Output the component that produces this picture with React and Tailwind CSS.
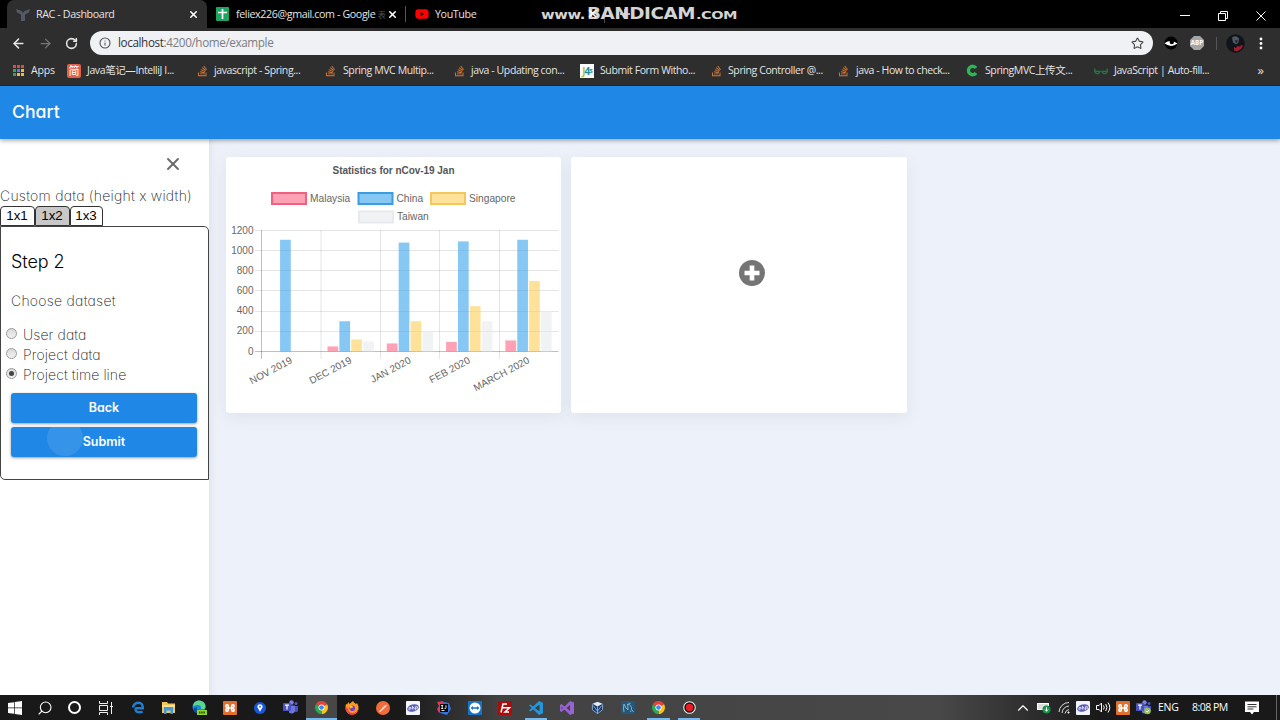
import React from 'react';
import {
    ArrowLeft, ArrowRight, RotateCw, Info, Star, X, Minus, EllipsisVertical, Search, ChevronUp,
} from 'lucide-react';
import { FaStackOverflow, FaYoutube, FaFirefoxBrowser } from 'react-icons/fa';

const BOOKMARKS = [
    { icon: 'jian', label: 'Java笔记—IntelliJ I...', width: 'w-[130px]', gap: 'gap-[6px]' },
    { icon: 'so', label: 'javascript - Spring...', width: 'w-[128px]', gap: 'gap-[5px]' },
    { icon: 'so', label: 'Spring MVC Multip...', width: 'w-[129px]', gap: 'gap-[6px]' },
    { icon: 'so', label: 'java - Updating con...', width: 'w-[126px]', gap: 'gap-[5px]' },
    { icon: 'j4s', label: 'Submit Form Witho...', width: 'w-[131px]', gap: 'gap-[6px]' },
    { icon: 'so', label: 'Spring Controller @...', width: 'w-[127px]', gap: 'gap-[5px]' },
    { icon: 'so', label: 'java - How to check...', width: 'w-[128px]', gap: 'gap-[6px]' },
    { icon: 'c', label: 'SpringMVC上传文...', width: 'w-[128px]', gap: 'gap-[6px]' },
    { icon: 'gfg', label: 'JavaScript | Auto-fill...', width: 'w-[128px]', gap: 'gap-[6px]' },
];

const SERIES = [
    { name: 'Malaysia', fill: '#ff6384', border: '#f0607f', legendX: 271, legendY: 198, values: [0, 50, 80, 95, 110] },
    { name: 'China', fill: '#36a2eb', border: '#3a9ddf', legendX: 357.5, legendY: 198, values: [1108, 300, 1080, 1092, 1108] },
    { name: 'Singapore', fill: '#ffce56', border: '#f5c75a', legendX: 430, legendY: 198, values: [0, 120, 300, 450, 700] },
    { name: 'Taiwan', fill: '#e7e9ed', border: '#e7e9ed', legendX: 358, legendY: 216.5, values: [0, 100, 200, 300, 400] },
];
const MONTHS = ['NOV 2019', 'DEC 2019', 'JAN 2020', 'FEB 2020', 'MARCH 2020'];

const BookmarkIcon = ({ type }) => {
    if (type === 'so') return <FaStackOverflow className="-ml-[1px] h-[12px] w-[13px] shrink-0 text-[#d97a33]" />;
    if (type === 'jian') {
        return <span className="flex h-[14px] w-[14px] shrink-0 items-center justify-center rounded-[2px] bg-[#e0604c] font-['Noto_Sans_CJK_SC',sans-serif] text-[11px] leading-none tracking-normal text-white">简</span>;
    }
    if (type === 'j4s') {
        return (
            <span className="flex h-[14px] w-[14px] shrink-0 items-center justify-center bg-white text-[10px] leading-none font-bold tracking-[-1px]">
                <span className="text-[#a7c81f]">J</span><span className="text-[#1c8f99]">4</span><span className="text-[7px] text-[#1c8f99]">s</span>
            </span>
        );
    }
    if (type === 'c') {
        return (
            <svg className="h-[13px] w-[13px] shrink-0" viewBox="0 0 13 13" fill="none">
                <path d="M10 4A4.2 4.2 0 1 0 10 9" stroke="#2fb457" strokeWidth="3.4" />
            </svg>
        );
    }
    return (
        <svg className="h-[12px] w-[14px] shrink-0" viewBox="0 0 14 12" fill="none" stroke="#1f7a42" strokeWidth="1.3">
            <path d="M0 6.300H6A2.700 3.200 0 1 1 1.200 3.600M14 6.300H8A2.700 3.200 0 1 0 12.800 3.600" />
        </svg>
    );
};

const TabStrip = () => (
    <div className="relative flex h-7 shrink-0 items-end bg-black pl-[7px] text-[10.7px] tracking-[-0.38px] text-[#e4e4e4]">
        <div className="flex h-7 w-[200px] items-center rounded-t-[7px] bg-[#2e2e2e] pl-[9px]">
            <svg className="h-[13px] w-[14px]" viewBox="0 0 14 13" fill="#515866">
                <path d="M0 1l5.500 2L7 5l1.500-2L14 1l-1 3.500-4 2V13H5V6.500L1 4.500z" />
            </svg>
            <span className="ml-[6px] w-[152px]">RAC - Dashboard</span>
            <X className="h-[11px] w-[11px] text-white" strokeWidth={3.4} />
        </div>
        <div className="flex h-7 w-[198px] items-center pl-[9px]">
            <svg className="h-[14px] w-[13px] shrink-0" viewBox="0 0 13 14">
                <rect width="13" height="14" rx="1" fill="#1ea562" />
                <path d="M6.500 2v10M2 5.500h9" stroke="#fff" strokeWidth="1.700" />
            </svg>
            <span className="ml-[7px] w-[151px] whitespace-nowrap">
                feliex226@gmail.com - Google <span className="text-[8px] text-[#555]">表</span>
            </span>
            <X className="h-[11px] w-[11px] shrink-0 text-white" strokeWidth={3.4} />
        </div>
        <div className="flex h-7 items-center">
            <div className="h-4 w-px bg-[#555]" />
            <FaYoutube className="ml-[9px] h-[14px] w-[14px] text-[#f00]" />
            <span className="ml-[6px]">YouTube</span>
        </div>
        <svg className="absolute top-0 left-[540px] h-7 w-[200px]" viewBox="0 0 200 28" fill="#d4d4d4" fontFamily="DejaVu Sans" fontWeight="bold">
            <path d="M64.500 6v17" stroke="#444" />
            <path d="M80 14h10M85 9v10" stroke="#eee" strokeWidth="1.500" />
            <text x="1" y="18.500" fontSize="13" textLength="44" lengthAdjust="spacingAndGlyphs">www.</text>
            <text x="47" y="18.500" fontSize="15.500" textLength="108" lengthAdjust="spacingAndGlyphs">BANDICAM</text>
            <text x="156" y="18.500" fontSize="11" textLength="41" lengthAdjust="spacingAndGlyphs">.COM</text>
            <path d="M49 10l7 7M56 10l-7 7" stroke="#fff" strokeWidth="1.500" />
        </svg>
        <div className="ml-auto flex h-[25px] items-center text-white">
            <svg className="mr-[28px] h-[10px] w-[10px]" viewBox="0 0 10 10" stroke="#fff">
                <path d="M0 4.500h10" />
            </svg>
            <svg className="mr-[28px] h-[10px] w-[10px]" viewBox="0 0 10 10" fill="none" stroke="#fff">
                <path d="M.5 2.500h7v7h-7zM2.500 2V.5h7v7H8" />
            </svg>
            <svg className="mr-[14px] h-[10px] w-[10px]" viewBox="0 0 10 10" stroke="#fff">
                <path d="M.5.5l9 9M9.500.5l-9 9" />
            </svg>
        </div>
    </div>
);

const AddressBar = () => (
    <div className="flex h-[30px] shrink-0 items-center bg-[#2e2e2e] pl-[11px]">
        <ArrowLeft className="h-[15px] w-[15px] text-[#e6e6e6]" strokeWidth={2.400} />
        <ArrowRight className="ml-[12px] h-[15px] w-[15px] text-[#777]" />
        <RotateCw className="ml-[12px] h-[13px] w-[13px] text-[#e6e6e6]" strokeWidth={2.800} />
        <div className="ml-[12px] flex h-[24px] w-[1063px] items-center rounded-full bg-[#eff1f5] pr-[9px] pl-[9px] text-[11.700px] tracking-[-0.38px]">
            <Info className="h-[12px] w-[12px] text-[#555]" strokeWidth={2.200} />
            <span className="ml-[7px] text-[#7a7d81]">
                <span className="text-[#333]">localhost</span>:4200/home/example
            </span>
            <Star className="ml-auto h-[13px] w-[13px] text-[#444]" strokeWidth={2} />
        </div>
        <svg className="ml-[11px] h-[14px] w-[14px]" viewBox="0 0 14 14">
            <circle cx="7" cy="7" r="6.500" fill="#000" />
            <path d="M.5 7.200Q7 2.500 13.500 7.500 7 12.500.5 7.200z" fill="#fff" />
            <circle cx="7.800" cy="6" r="2.200" fill="#000" />
        </svg>
        <svg className="ml-[12px] h-[14px] w-[14px]" viewBox="0 0 14 14">
            <path d="M4 0h6l4 4v6l-4 4H4l-4-4V4z" fill="#a5a5a5" />
            <text x="7" y="9.300" fill="#fff" fontSize="6.200" fontWeight="bold" textAnchor="middle">ABP</text>
        </svg>
        <div className="ml-[12px] h-[13px] w-px bg-[#555]" />
        <svg className="ml-[9px] h-[19px] w-[19px]" viewBox="0 0 19 19">
            <circle cx="9.500" cy="9.500" r="9.300" fill="#11141a" />
            <path d="M6 3.500q4-3 7 1l-.5 4-2.500 2-3-2z" fill="#4d5860" />
            <path d="M9 6l3 .5-2 3z" fill="#20252c" />
            <path d="M8 13l2 1 1.500-2 2 .5 2-1.500 1.500 1-2 3-4 2.500-3-1z" fill="#9c1f2f" />
        </svg>
        <svg className="ml-[14px] h-[13px] w-[4px]" viewBox="0 0 4 13" fill="#fff">
            <circle cx="2" cy="2" r="1.400" />
            <circle cx="2" cy="6.500" r="1.400" />
            <circle cx="2" cy="11" r="1.400" />
        </svg>
    </div>
);

const BookmarksBar = () => (
    <div className="flex h-[28px] shrink-0 items-center border-b border-[#152b42] bg-[#2e2e2e] pb-[2px] pl-[13px] text-[10.5px] whitespace-nowrap text-[#e4e4e4]">
        <div className="flex w-[54px] items-center gap-[7px] tracking-[-0.2px]">
            <svg className="h-[11px] w-[11px] shrink-0" viewBox="0 0 11 11">
                {['#e04b3d', '#e04b3d', '#e04b3d', '#32a556', '#4285f4', '#eebd35', '#32a556', '#eebd35', '#eebd35'].map((c, i) => (
                    <rect key={i} x={(i % 3) * 4} y={Math.floor(i / 3) * 4} width="3" height="3" fill={c} />
                ))}
            </svg>
            <span>Apps</span>
        </div>
        {BOOKMARKS.map((b) => (
            <div key={b.label} className={`flex shrink-0 items-center tracking-[-0.4px] ${b.width} ${b.gap}`}>
                <BookmarkIcon type={b.icon} />
                <span>{b.label}</span>
            </div>
        ))}
        <span className="mr-[16px] ml-auto text-[13px]">»</span>
    </div>
);

const Radio = ({ label, checked }) => (
    <label className="flex h-5 items-center gap-[6px]">
        <span className="-mt-[2px] flex h-[11px] w-[11px] items-center justify-center rounded-full border border-[#9a9a9a] bg-gradient-to-b from-[#d9d9d9] to-[#f1f1f1]">
            {checked && <span className="h-[5px] w-[5px] rounded-full bg-[#444]" />}
        </span>
        <span className="text-[14px] tracking-[0.1px]">{label}</span>
    </label>
);

const Sidebar = () => (
    <aside className="flex w-[209px] shrink-0 flex-col bg-white font-['Inter',sans-serif] font-extralight text-[#222] [font-feature-settings:'cv11']">
        <div className="flex h-[46px] items-center justify-end pt-[4px] pr-[26px]">
            <X className="h-[20px] w-[20px] text-[#6a6a6a]" strokeWidth={2.3} />
        </div>
        <div className="flex h-[21px] items-center pb-px text-[14px] tracking-[0.25px] whitespace-nowrap">Custom data (height x width)</div>
        <div className="flex h-[20px] font-['Liberation_Sans',sans-serif] text-[13.33px] font-normal text-black">
            {['1x1', '1x2', '1x3'].map((size) => (
                <button
                    key={size}
                    className={`flex h-[20px] items-center justify-center rounded-t-[4px] border border-[#333] pr-px ${size === '1x3' ? 'w-[33px]' : 'w-[35px]'} ${size === '1x2' ? 'bg-[#c8c8c8]' : 'bg-white'}`}
                >
                    {size}
                </button>
            ))}
        </div>
        <div className="flex h-[254px] flex-col rounded-tr-[5px] rounded-bl-[5px] border border-[#444] pr-[11px] pl-[10px]">
            <h2 className="mt-[23px] text-[18px] leading-[24px] font-light tracking-[-0.1px] text-black">Step 2</h2>
            <p className="mt-[17px] text-[14px] leading-[20px] tracking-[0.25px]">Choose dataset</p>
            <div className="mt-[13px] -ml-[5px]">
                <Radio label="User data" />
                <Radio label="Project data" />
                <Radio label="Project time line" checked />
            </div>
            <button className="mt-[9px] h-[30px] rounded-[3px] bg-[#1f87e5] text-[12.500px] font-semibold text-white shadow-[0_1px_3px_rgba(0,0,0,0.4)]">Back</button>
            <button className="relative mt-[4px] h-[30px] overflow-hidden rounded-[3px] bg-[#1f87e5] text-[12.500px] font-semibold text-white shadow-[0_1px_3px_rgba(0,0,0,0.4)]">
                <span className="absolute -top-[7px] left-[36px] h-9 w-9 rounded-full bg-white/10" />
                Submit
            </button>
        </div>
    </aside>
);

const yOf = (value) => 351.5 - (value * 121) / 1200;

const BarChart = () => (
    <svg className="h-[256px] w-[335px]" viewBox="226 157 335 256" fontFamily="Liberation Sans" fontSize="10" fill="#666">
        <text x="393.500" y="174" fontWeight="bold" textAnchor="middle" textLength="122" fill="#555">Statistics for nCov-19 Jan</text>
        {SERIES.map((s) => (
            <g key={s.name}>
                <rect x={s.legendX + 1} y={s.legendY - 5} width="34" height="11" fill={s.fill} fillOpacity="0.6" stroke={s.border} strokeWidth="2" />
                <text x={s.legendX + 39} y={s.legendY + 3.500} fontSize="10.200">{s.name}</text>
            </g>
        ))}
        <g stroke="#000" strokeOpacity="0.1">
            {[230.5, 250.5, 270.5, 290.5, 311.5, 331.5].map((y) => <path key={y} d={`M255 ${y}H558.5`} />)}
            {[321, 380.5, 439.5, 499.5].map((x) => <path key={x} d={`M${x} 230V359`} />)}
            <path d="M261.500 230V359M255 351.500H558.500" strokeOpacity="0.25" />
        </g>
        {[1200, 1000, 800, 600, 400, 200, 0].map((v) => (
            <text key={v} x="253.500" y={yOf(v) + 3} textAnchor="end">{v}</text>
        ))}
        {SERIES.map((s, si) => s.values.map((v, i) => (
            <rect key={`${s.name}-${i}`} x={268.2 + i * 59.3 + si * 11.87} y={yOf(v)} width="10.700" height={351.5 - yOf(v)} fill={s.fill} fillOpacity="0.6" />
        )))}
        {MONTHS.map((m, i) => (
            <text key={m} textAnchor="end" transform={`translate(${293 + i * 59.3} 362.500) rotate(-28)`}>{m}</text>
        ))}
    </svg>
);

const Tile = ({ bg, children, round }) => (
    <svg className="h-[14px] w-[14px]" viewBox="0 0 14 14">
        {round ? <circle cx="7" cy="7" r="7" fill={bg} /> : <rect width="14" height="14" rx="1" fill={bg} />}
        {children}
    </svg>
);

const Chrome = () => (
    <svg className="h-[13px] w-[13px]" viewBox="0 0 14 14">
        <path d="M7 7L.94 3.500A7 7 0 0 1 13.060 3.500z" fill="#e5443a" />
        <path d="M7 7L13.060 3.500A7 7 0 0 1 7 14z" fill="#fbc116" />
        <path d="M7 7V14A7 7 0 0 1 .94 3.500z" fill="#2da94f" />
        <circle cx="7" cy="7" r="3.300" fill="#fff" />
        <circle cx="7" cy="7" r="2.500" fill="#4285f4" />
    </svg>
);

const Xampp = () => (
    <Tile bg="#e2702d">
        <path d="M5.300 7H8.700M5.300 4.500V9.500M8.700 4.500V9.500M5.300 4.700A1.300 1.300 0 1 0 3.700 6.300Q4.300 7 3.700 7.700A1.300 1.300 0 1 0 5.300 9.300M8.700 4.700A1.300 1.300 0 1 1 10.300 6.300Q9.700 7 10.300 7.700A1.300 1.300 0 1 1 8.700 9.300" fill="none" stroke="#fff" strokeWidth="1.500" />
    </Tile>
);

const Teams = ({ badge }) => (
    <svg className="h-[15px] w-[15px]" viewBox="0 0 15 15">
        <circle cx="8.500" cy="2.500" r="2.200" fill="#7b83eb" />
        <circle cx="13" cy="3.500" r="1.500" fill="#5059c9" />
        <path d="M6 5.500h6v6a3.500 3 0 0 1-6 1z" fill="#6d75dd" />
        <path d="M12 6h3v4.500a2 2 0 0 1-3 1z" fill="#4a52bd" />
        <rect y="3" width="8" height="8" rx="1" fill="#4b53bc" />
        <path d="M2 5.200h4M4 5.200V9.500" stroke="#fff" strokeWidth="1.200" />
        {badge && <circle cx="11.500" cy="11" r="3.300" fill="#92c353" />}
        {badge && <path d="M10 11l1.200 1.200L13 10" stroke="#fff" fill="none" />}
    </svg>
);

const Php = () => (
    <Tile bg="#f4f4fb">
        <ellipse cx="7" cy="7" rx="6" ry="3.500" fill="#5c5fb8" transform="rotate(-15 7 7)" />
        <path d="M3 9.500v-3h2v1.500H3M6.500 5v3.500M6.500 6.500h1.500v2M9.500 9V5.700h2v1.600h-2" stroke="#e6e6fa" strokeWidth=".8" fill="none" />
    </Tile>
);

const TASKS = [
    { key: 'start', icon: <svg className="h-[14px] w-[14px]" viewBox="0 0 14 14" fill="#fff"><path d="M0 2l6-.8v5.400H0zM6.700 1.100L14 0v6.600H6.700zM0 7.300h6v5.500L0 12zM6.700 7.300H14V14l-7.300-1z" /></svg> },
    { key: 'search', icon: <Search className="mr-[2px] h-[16px] w-[16px] -scale-x-100 text-white" strokeWidth={1.6} /> },
    { key: 'cortana', icon: <span className="mr-[4px] h-[13px] w-[13px] rounded-full border-2 border-white" /> },
    { key: 'taskview', icon: <svg className="mr-[4px] h-[14px] w-[15px]" viewBox="0 0 15 14" fill="none" stroke="#eee"><path d="M1.500 4.500h8v5h-8zM1.500 0v2.500h8V0M1.500 14v-2.500h8V14M13.500 1v12M12 5.500h3" /></svg> },
    { key: 'edge', icon: <svg className="h-[13px] w-[12px]" viewBox="0 0 13 13" fill="none" stroke="#1b7fd6" strokeWidth="2.600"><path d="M1 6.500C2 2.500 4.500 1.300 7 1.300c3.500 0 4.800 2.500 4.700 6H4.500M4.200 6.500Q3 11.700 7.500 11.700 10 11.700 11.500 10.700" /></svg> },
    { key: 'explorer', icon: <svg className="h-[12px] w-[13px]" viewBox="0 0 13 12"><path d="M0 0h5l1 1.500h7V11H0z" fill="#f2c556" /><path d="M2 5h9v7H8.500V8.500h-4V12H2z" fill="#3d9bdc" /><path d="M0 3h13v2H0z" fill="#fbe19b" /></svg> },
    { key: 'edge-can', icon: <svg className="h-[15px] w-[15px]" viewBox="0 0 15 15"><circle cx="7" cy="7" r="6.500" fill="#168bd4" /><path d="M1 6a6.200 6 0 0 1 12.500 1c0 3-5 2.500-4.500 1S8 4.500 5 5 1 7 1 6z" fill="#5cd68b" /><path d="M5 7q-1 4 4 5l-3 1.500Q1 12 1.500 8.500z" fill="#0c4f9b" /><rect x="5" y="10" width="10" height="5" fill="#8fd12c" /><path d="M7 12.500h6" stroke="#28550d" strokeWidth="2" strokeDasharray="1.500 .7" /></svg> },
    { key: 'xampp', icon: <Xampp /> },
    { key: 'maps', icon: <svg className="h-[12px] w-[12px]" viewBox="0 0 14 14"><circle cx="7" cy="7" r="7" fill="#1757d8" /><path d="M7 2.500a3 3 0 0 1 2 5.300L7 11.500 5 7.800A3 3 0 0 1 7 2.500z" fill="#fff" /><circle cx="7" cy="5.500" r="1" fill="#1757d8" /></svg> },
    { key: 'teams', icon: <Teams /> },
    { key: 'chrome', icon: <Chrome />, active: true },
    { key: 'firefox', icon: <svg className="h-[14px] w-[14px]" viewBox="0 0 14 14"><path d="M1 3l1 .5L3.500 1l1 2L8 0q1 2 3 3l1-1q2 3 1.500 6a6.600 6.600 0 0 1-13 0Q.3 5 1 3z" fill="#ff9821" /><path d="M.5 6q0 7 6.500 8 6-.5 6.500-7-2 5-5.500 5Q3 12 2.500 7z" fill="#f23c53" /><circle cx="7.300" cy="7.300" r="2.800" fill="#7b3fc6" /><path d="M5 4.500q3 0 3 2l-3 1z" fill="#ffbd35" /></svg> },
    { key: 'postman', icon: <Tile bg="#f26b3a" round><path d="M3.500 10.500l5-5.500 2-1-1 2-5 4.500z" fill="#f9d4c4" stroke="#fff" strokeWidth=".5" /></Tile> },
    { key: 'php', icon: <Php /> },
    { key: 'intellij', icon: <svg className="h-[14px] w-[14px]" viewBox="0 0 14 14"><path d="M0 1l6-1 3 5-7 7-2-4 2-3z" fill="#e6375e" /><path d="M7 1l5 1 2 6-4 6-7-2z" fill="#3573d9" /><rect x="3" y="3" width="8" height="8" fill="#080808" /><path d="M4.200 4.500h2M5.200 4.500v3M4.200 7.500h2M9 4.300v2.500q0 1-1.500.7M4.500 9.500h3" stroke="#fff" strokeWidth=".9" fill="none" /></svg> },
    { key: 'teamviewer', icon: <Tile bg="#1473cc"><circle cx="7" cy="7" r="5.500" fill="#fff" /><path d="M2.500 7L5 5v1.300h4V5l2.500 2L9 9V7.700H5V9z" fill="#1473cc" /></Tile> },
    { key: 'filezilla', icon: <Tile bg="#a90d0d"><path d="M3 11.500L5 3h4M4 6.800h3.500M7.500 6.800h4L7 11h4" stroke="#fff" strokeWidth="1.500" fill="none" /></Tile> },
    { key: 'vscode', icon: <svg className="h-[14px] w-[14px]" viewBox="0 0 14 14"><path d="M10 0l4 1.700v10.600L10 14 1 5.300 0 4.600l1.300-1L10.300 10V4L1.300 10.400 0 9.400z" fill="#2496dc" /><path d="M10.300 4v6L6.300 7z" fill="#3d3d3d" /></svg>, open: true },
    { key: 'vs', icon: <svg className="h-[14px] w-[14px]" viewBox="0 0 14 14"><path d="M10 0l4 1.500v11L10 14 4.500 8.500 1.500 11 0 10V4l1.500-1 3 2.500zM10 4L6.500 7l3.500 3zM1.500 5.500v3L3 7z" fill="#9862d3" fillRule="evenodd" /></svg> },
    { key: 'virtualbox', icon: <svg className="h-[13px] w-[13px]" viewBox="0 0 14 14"><path d="M1 3l6-3 6 3v7l-6 4-6-4z" fill="#173c69" /><path d="M1.500 3L7 .7 12.500 3 7 5.800z" fill="#e4ebf3" /><path d="M7 5.800V13.500M1.500 3.500v6l5.500 4 5.500-4v-6M2.500 5l4.500 6 4.500-6" stroke="#9fb9d6" strokeWidth=".9" fill="none" /></svg> },
    { key: 'mysql', icon: <svg className="h-[13px] w-[14px]" viewBox="0 0 14 13"><rect width="14" height="13" rx="1" fill="#245779" /><path d="M3 11q-1-4 0-8 2 5 4 6 0-4-.5-6Q11 4 10.500 8.500M10.500 8.500l2 2.500M10 9.500l-.5 1.500M7.500 2l2 .5" fill="none" stroke="#8ebfd6" strokeWidth=".9" /></svg> },
    { key: 'chrome2', icon: <Chrome />, open: true },
    { key: 'bandicam', icon: <svg className="h-[13px] w-[13px]" viewBox="0 0 14 14"><circle cx="7" cy="7" r="6.200" fill="#111" stroke="#eee" strokeWidth="1.200" /><circle cx="7" cy="7" r="4" fill="#ed1c24" /></svg>, open: true },
];

const Taskbar = () => (
    <div className="flex h-[25px] shrink-0 items-stretch bg-[linear-gradient(90deg,#191919_0px,#191919_400px,#424242_500px,#484848_940px,#2b2b2b_1040px,#191919_1100px)] text-[10.5px] text-white">
        {TASKS.map((t) => (
            <div key={t.key} className={`relative flex w-[30.64px] shrink-0 items-center justify-center ${t.active ? 'bg-[#474747]' : ''}`}>
                {t.icon}
                {t.active && <span className="absolute inset-x-0 bottom-0 h-[2px] bg-[#76b9ed]" />}
                {t.open && <span className="absolute inset-x-[4px] bottom-0 h-[2px] bg-[#76b9ed]" />}
            </div>
        ))}
        <div className="ml-auto flex items-center">
            <ChevronUp className="h-[18px] w-[18px]" strokeWidth={1.5} />
            <svg className="ml-[5px] h-[13px] w-[14px]" viewBox="0 0 14 13"><rect x=".5" y="2.500" width="11" height="6" fill="#ddd" stroke="#fff" /><circle cx="9.500" cy="8.500" r="4" fill="#159447" /><path d="M9.500 6v4M8 8.500l1.500 1.800L11 8.500" stroke="#fff" fill="none" /></svg>
            <svg className="ml-[7px] h-[13px] w-[12px]" viewBox="0 0 12 13" fill="none" stroke="#ddd"><path d="M1 11A10 10 0 0 1 11 1.500M4 12A8 8 0 0 1 11 5M7 12.500A5 5 0 0 1 11 8.500" /><circle cx="10.500" cy="11.500" r=".7" fill="#fff" /></svg>
            <span className="ml-[6px]"><Php /></span>
            <svg className="ml-[6px] h-[13px] w-[15px]" viewBox="0 0 15 13" fill="none" stroke="#fff"><path d="M.5 4.500H3L5.500 2v9L3 8.500H.5zM7.500 4.500q1.500 2 0 4M9.700 3q2.500 3.500 0 7M12 1.500q3.500 5 0 10" /></svg>
            <span className="ml-[5px]"><Xampp /></span>
            <span className="ml-[6px]"><Teams badge /></span>
            <span className="ml-[7px] w-[34px] tracking-[-0.3px]">ENG</span>
            <span className="w-[53px] tracking-[-0.5px]">8:08 PM</span>
            <svg className="mr-[17px] h-[14px] w-[14px]" viewBox="0 0 14 14"><path d="M0 .5h14v10.500H9L7 13.500 5 11H0z" fill="#fff" /><path d="M2.500 3.500h9M2.500 5.800h9M2.500 8h6" stroke="#333" /></svg>
            <div className="mr-[3px] h-[25px] w-px bg-[#666]" />
        </div>
    </div>
);

const App = () => (
    <div className="flex h-[720px] w-[1280px] flex-col overflow-hidden font-['Open_Sans','Noto_Sans_CJK_SC',sans-serif]">
        <TabStrip />
        <AddressBar />
        <BookmarksBar />
        <header className="relative z-10 flex h-[53px] shrink-0 items-center bg-[#1f87e5] pl-[12px] font-['Inter',sans-serif] text-[17.700px] font-medium text-white shadow-[0_2px_4px_rgba(0,0,0,0.3)] [font-feature-settings:'cv11']">
            Chart
        </header>
        <div className="flex flex-1">
            <Sidebar />
            <main className="flex flex-1 items-start gap-[10px] bg-[#edf1f9] pt-[18px] pl-[17px] shadow-[inset_8px_0_10px_-8px_rgba(90,110,140,0.15)]">
                <div className="h-[256px] w-[335px] rounded-[3px] bg-white shadow-[0_4px_16px_rgba(90,110,140,0.1)]">
                    <BarChart />
                </div>
                <div className="flex h-[256px] w-[336px] items-center justify-center rounded-[3px] bg-white shadow-[0_4px_16px_rgba(90,110,140,0.1)]">
                    <svg className="-mt-[24px] ml-[26px] h-[26px] w-[26px]" viewBox="0 0 26 26">
                        <circle cx="13" cy="13" r="13" fill="#757575" />
                        <path d="M13 5.500v15M5.500 13h15" stroke="#fff" strokeWidth="4.600" />
                    </svg>
                </div>
            </main>
        </div>
        <Taskbar />
    </div>
);

export default App;
